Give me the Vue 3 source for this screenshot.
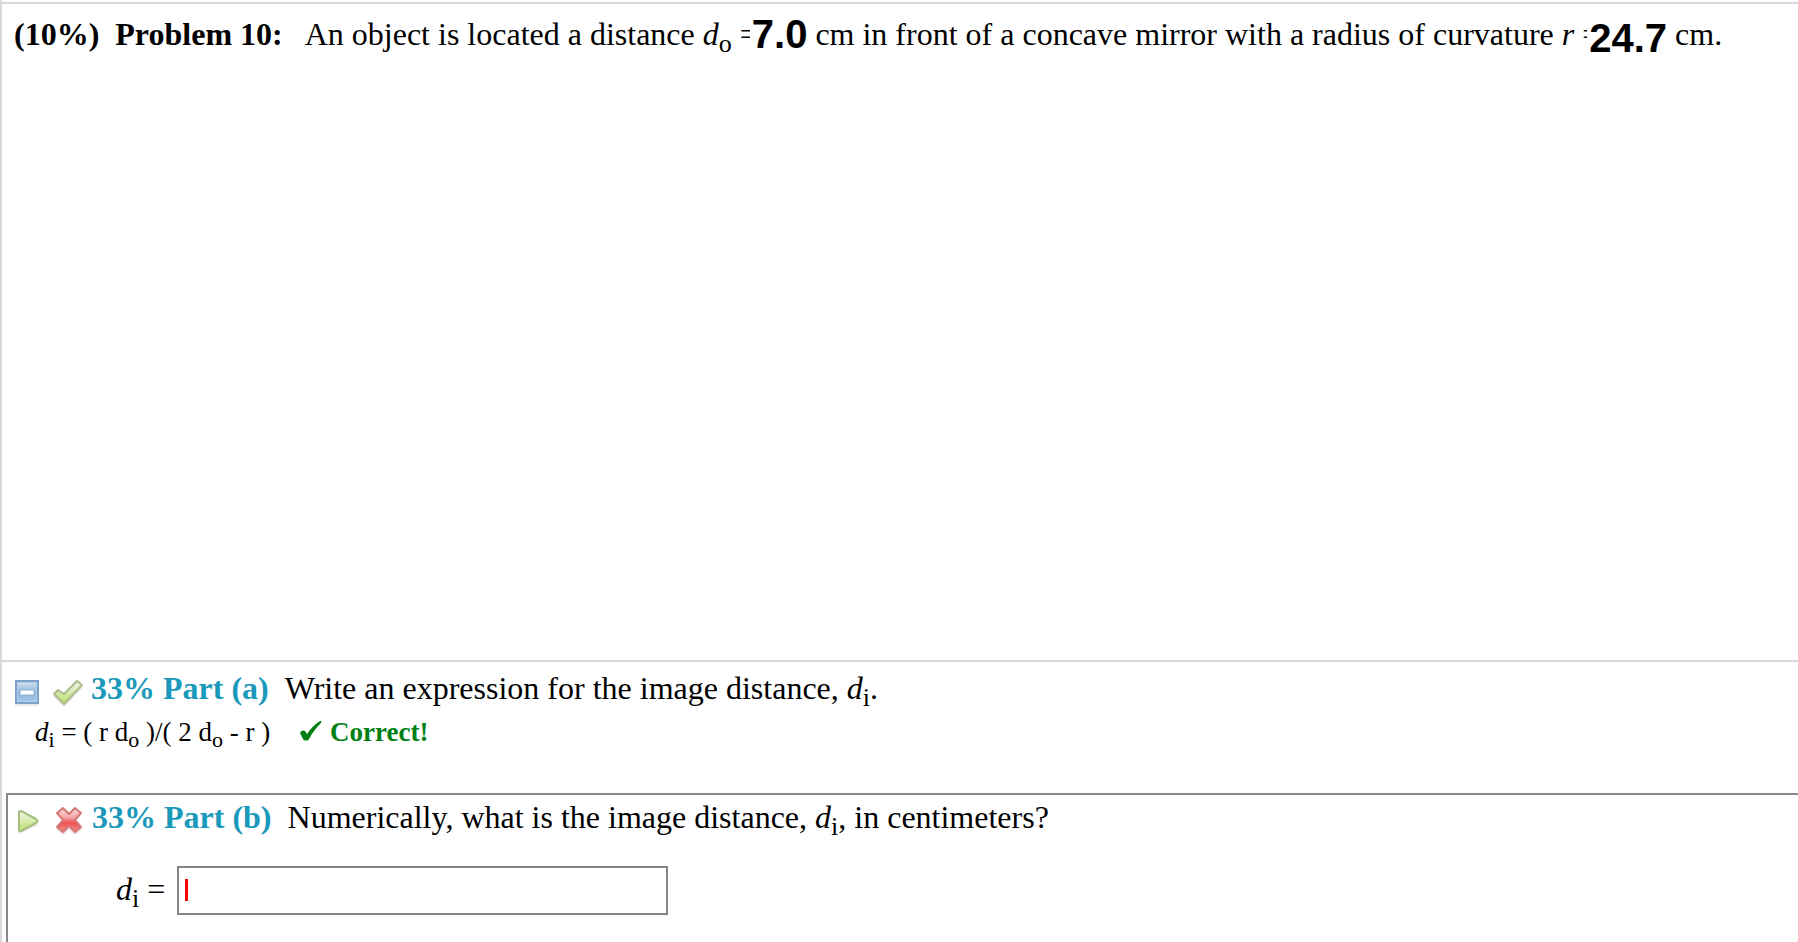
<template>
  <main class="problem-page">
    <section class="statement">
      <p class="line">
        <b class="weight">(10%)</b>
        <b class="title">Problem 10:</b>
        <span>An object is located a distance <i>d</i><sub>o</sub> <span class="eq">=</span><strong class="value">{{ objectDistance }}</strong> cm in front of a concave mirror with a radius of curvature <i>r</i> <span class="eq short">=</span><strong class="value radius">{{ radius }}</strong> cm.</span>
      </p>
    </section>

    <section class="part">
      <div class="line part-head">
        <button class="toggle" type="button" aria-label="Collapse part (a)">
          <svg width="26" height="28" viewBox="0 0 26 28">
            <defs>
              <linearGradient id="blue" x1="0" y1="0" x2="0" y2="1">
                <stop offset="0" stop-color="#dce8f4" />
                <stop offset="0.5" stop-color="#8fb7db" />
                <stop offset="1" stop-color="#a3c6e6" />
              </linearGradient>
            </defs>
            <rect x="1" y="26" width="24" height="2" fill="#ece8e4" />
            <rect x="2" y="3" width="22" height="22" fill="url(#blue)" stroke="#7da3cb" stroke-width="2" />
            <rect x="3.500" y="4.500" width="19" height="19" fill="none" stroke="#b4cfe8" />
            <rect x="6" y="12" width="14" height="5" rx="1" fill="#fff" stroke="#8db3d8" />
          </svg>
        </button>
        <svg class="mark" width="31" height="28" viewBox="0 1 31 28">
          <defs>
            <linearGradient id="green" x1="0" y1="0" x2="0" y2="1">
              <stop offset="0" stop-color="#f4f6ee" />
              <stop offset="0.5" stop-color="#d6e8ac" />
              <stop offset="1" stop-color="#bde06a" />
            </linearGradient>
          </defs>
          <path d="M2 19 L12 29 L30 10" fill="none" stroke="#ece8e4" stroke-width="2" />
          <path d="M2 17 L6 13 L12 17 L25 4 L30 8 L12 27 Z" fill="url(#green)" stroke="#a9bd88" stroke-width="2" stroke-linejoin="round" />
        </svg>
        <b class="part-name">33% Part (a)</b>
        <span>Write an expression for the image distance, <i>d</i><sub>i</sub>.</span>
      </div>
      <div class="answer">
        <span><i>d</i><sub>i</sub> = ( r d<sub>o</sub> )/( 2 d<sub>o</sub> - r )</span>
        <b class="correct">
          <svg width="22" height="20" viewBox="0 0 22 20">
            <path d="M0 12 C1 9 4 9 5 10 C6 11 6 12 7 13 C11 7 15 3 20 0 C21 0 22 0 21 2 C17 6 12 12 9 18 C8 20 4 20 3 18 C2 16 1 14 0 12 Z" fill="#008013" />
          </svg>
          Correct!
        </b>
      </div>
    </section>

    <section class="part active">
      <div class="line part-head">
        <button class="toggle" type="button" aria-label="Expand part (b)">
          <svg width="26" height="28" viewBox="0 0 26 28">
            <path d="M3 26 L22 17" fill="none" stroke="#ece8e4" stroke-width="2" />
            <path d="M3 5 Q3 4 5 4 L20 12 Q23 14 20 16 L5 24 Q3 25 3 23 Z" fill="url(#green)" stroke="#a5c07e" stroke-width="2" stroke-linejoin="round" />
          </svg>
        </button>
        <svg class="mark" width="30" height="28" viewBox="1 2 30 28">
          <defs>
            <linearGradient id="red" x1="0" y1="0" x2="0" y2="1">
              <stop offset="0" stop-color="#fadada" />
              <stop offset="0.400" stop-color="#f5a5a5" />
              <stop offset="0.600" stop-color="#f05555" />
              <stop offset="1" stop-color="#f58a8a" />
            </linearGradient>
          </defs>
          <path d="M4 24 L10 29 L16 23 L22 29 L28 24" fill="none" stroke="#ece4e2" stroke-width="2" />
          <path d="M10 3 L16 9 L22 3 L28 8 L22 15 L28 22 L22 27 L16 21 L10 27 L4 22 L10 15 L4 8 Z" fill="url(#red)" stroke="#d47878" stroke-width="2" stroke-linejoin="round" />
        </svg>
        <b class="part-name">33% Part (b)</b>
        <span>Numerically, what is the image distance, <i>d</i><sub>i</sub>, in centimeters?</span>
      </div>
      <div class="entry">
        <label for="distance"><i>d</i><sub>i</sub> =</label>
        <div class="field">
          <input id="distance" v-model="imageDistance" type="text" autocomplete="off" />
          <span v-if="!imageDistance" class="caret"></span>
        </div>
      </div>
    </section>
  </main>
</template>

<script setup>
import { ref } from 'vue'

const objectDistance = '7.0'
const radius = '24.7'
const imageDistance = ref('')
</script>

<style>
body {
  background: #fff;
}
</style>

<style scoped>
.problem-page {
  box-sizing: border-box;
  min-height: 100vh;
  padding-top: 2px;
  display: flex;
  flex-direction: column;
  border-left: 2px solid #d8d8d8;
  color: #000;
  font-family: "Liberation Serif", "Times New Roman", serif;
  font-size: 32px;
  overflow: hidden;
}
.statement {
  flex: 1;
  padding: 12px 12px 0;
  border-top: 2px solid #d8d8d8;
}
.line {
  margin: 0;
  line-height: 36px;
}
.weight {
  margin-right: 8px;
}
.title {
  margin: 0 22px 0 8px;
}
sub {
  font-size: 26px;
  line-height: 0;
}
/* only the left end of the equals sign shows before a value */
.eq {
  display: inline-block;
  width: 10px;
  overflow: clip;
}
.eq.short {
  width: 5px;
}
.value {
  display: inline-block;
  padding-left: 2px;
  font-family: "Liberation Sans", Arial, sans-serif;
  font-size: 40px;
  line-height: 32px;
  vertical-align: -3px;
}
.value.radius {
  vertical-align: -7px;
}
.part {
  padding: 8px 12px 46px;
  border-top: 2px solid #d8d8d8;
}
.part-head {
  display: flex;
  align-items: center;
}
.toggle {
  display: flex;
  margin: 8px 0 0;
  padding: 0;
  border: 0;
  background: none;
  cursor: pointer;
}
.mark {
  margin: 8px 8px 0 12px;
  overflow: visible;
}
.part-name {
  margin-right: 16px;
  color: #1a9aba;
}
.answer {
  display: flex;
  gap: 30px;
  margin: 11px 0 0 21px;
  font-size: 27px;
  line-height: 30px;
}
.answer sub {
  font-size: 22px;
}
.correct {
  color: #008013;
}
.correct svg {
  margin-right: 1px;
}
.part.active {
  margin-left: 4px;
  padding: 4px 8px 27px;
  border-top-color: #888;
  border-left: 2px solid #888;
}
.entry {
  display: flex;
  align-items: center;
  gap: 12px;
  margin: 31px 0 0 100px;
}
.entry label {
  padding-bottom: 2px;
}
.field {
  position: relative;
  flex: 0 1 491px;
}
.field input {
  box-sizing: border-box;
  display: block;
  width: 100%;
  height: 49px;
  padding: 0 8px;
  border: 2px solid #848484;
  outline: none;
  background: #fff;
  font: inherit;
  font-size: 27px;
  caret-color: #f00;
}
.caret {
  position: absolute;
  top: 13px;
  left: 8px;
  width: 3px;
  height: 22px;
  background: #f00;
}
</style>
